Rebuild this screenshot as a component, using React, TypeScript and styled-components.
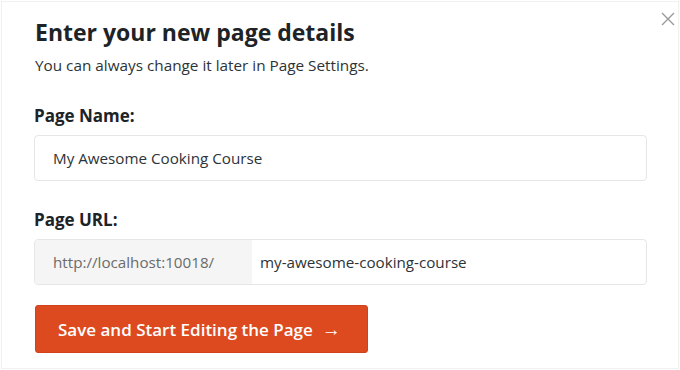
import styled, { createGlobalStyle } from "styled-components";

const GlobalStyle = createGlobalStyle`
  html, body {
    margin: 0;
    padding: 0;
    background: #ffffff;
    font-family: "Open Sans", "Noto Sans", sans-serif;
    color: #1d2327;
  }
  * { box-sizing: border-box; }
`;

const Page = styled.div`
  padding: 1px;
`;

const Card = styled.div`
  position: relative;
  width: 678px;
  height: 368px;
  border: 1px solid #f0f0f0;
  padding: 15px 31px 0 32px;
  display: flex;
  flex-direction: column;
`;

const CloseButton = styled.button`
  position: absolute;
  top: 7px;
  right: 0px;
  width: 20px;
  height: 20px;
  padding: 0;
  border: none;
  background: none;
  color: #9a9a9a;
  cursor: pointer;
  display: flex;
  align-items: center;
  justify-content: center;
`;

const Title = styled.h2`
  margin: 0 0 0 1px;
  font-size: 23px;
  line-height: 30px;
  font-weight: 700;
  color: #1d2327;
`;

const Subtitle = styled.p`
  margin: 7px 0 0 1px;
  font-size: 15.3px;
  line-height: 22px;
  color: #2c3338;
`;

const Field = styled.div`
  display: flex;
  flex-direction: column;
  margin-top: ${(p: { $top: number }) => p.$top}px;
`;

const Label = styled.label`
  margin-left: 0;
  font-size: 17px;
  line-height: 22px;
  font-weight: 700;
  color: #1d2327;
`;

const InputBox = styled.div`
  margin-top: 8px;
  height: 46px;
  border: 1px solid #e6e6e6;
  border-radius: 4px;
  display: flex;
  overflow: hidden;
  font-size: 15.2px;
  color: #2c3338;
`;

const Prefix = styled.div`
  width: 217px;
  background: #f5f5f5;
  color: #6b6b6b;
  display: flex;
  align-items: center;
  padding-left: 18px;
`;

const Value = styled.div`
  flex: 1;
  display: flex;
  align-items: center;
  padding-left: ${(p: { $pad: number }) => p.$pad}px;
`;

const SubmitButton = styled.button`
  margin-top: 20px;
  align-self: flex-start;
  width: 333px;
  height: 48px;
  margin-left: 1px;
  border: 1px solid #d04219;
  border-radius: 3px;
  background: #dd4a1f;
  color: #ffffff;
  font-family: "Open Sans", "Noto Sans", sans-serif;
  font-size: 17px;
  font-weight: 600;
  display: flex;
  align-items: center;
  gap: 9px;
  padding-left: 22px;
  cursor: pointer;
`;

const Arrow = styled.span`
  font-size: 19px;
  line-height: 1;
`;

export default function App() {
  return (
    <Page>
      <GlobalStyle />
      <Card>
        <CloseButton aria-label="Close">
          <svg width="14" height="14" viewBox="0 0 14 14">
            <path d="M1 1 L13 13 M13 1 L1 13" stroke="currentColor" strokeWidth="1.4" />
          </svg>
        </CloseButton>
        <Title>Enter your new page details</Title>
        <Subtitle>You can always change it later in Page Settings.</Subtitle>
        <Field $top={29}>
          <Label>Page Name:</Label>
          <InputBox>
            <Value $pad={18}>My Awesome Cooking Course</Value>
          </InputBox>
        </Field>
        <Field $top={28}>
          <Label>Page URL:</Label>
          <InputBox>
            <Prefix>http://localhost:10018/</Prefix>
            <Value $pad={8}>my-awesome-cooking-course</Value>
          </InputBox>
        </Field>
        <SubmitButton>
          Save and Start Editing the Page
          <Arrow>→</Arrow>
        </SubmitButton>
      </Card>
    </Page>
  );
}
